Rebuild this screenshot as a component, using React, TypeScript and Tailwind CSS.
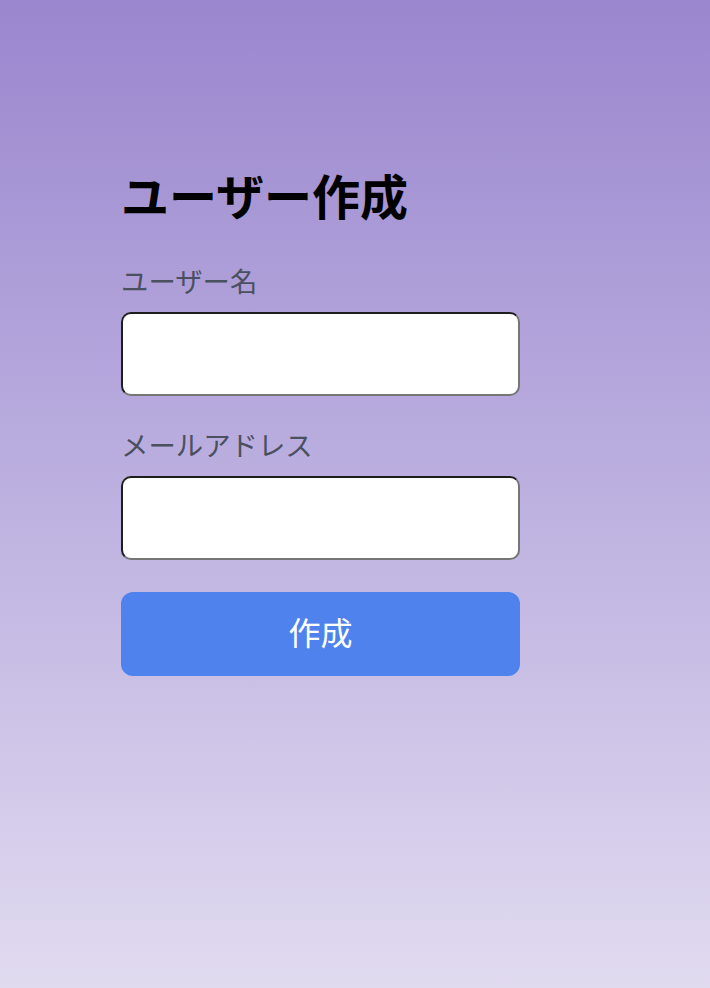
import React from "react";

export default function App() {
  return (
    <div
      className="min-h-[988px] w-full bg-gradient-to-b from-[#9a86ce] to-[#e1dbf0]"
      style={{ fontFamily: '"Noto Sans CJK JP", "Noto Sans", sans-serif' }}
    >
      <div className="pl-[121px] pt-[170px] w-[520px] flex flex-col">
        <h1 className="text-[48px] leading-[48px] font-bold text-black">ユーザー作成</h1>
        <label className="mt-[48px] text-[27.4px] leading-[28px] text-[#4b5060]">ユーザー名</label>
        <input
          type="text"
          className="mt-[18px] h-[84px] w-[399px] rounded-[10px] bg-white border-2 border-solid border-t-[#1e1e1e] border-l-[#1e1e1e] border-r-[#767676] border-b-[#767676] outline-none px-3 text-[28px]"
        />
        <label className="mt-[34px] text-[27.4px] leading-[28px] text-[#4b5060]">メールアドレス</label>
        <input
          type="email"
          className="mt-[18px] h-[84px] w-[399px] rounded-[10px] bg-white border-2 border-solid border-t-[#1e1e1e] border-l-[#1e1e1e] border-r-[#767676] border-b-[#767676] outline-none px-3 text-[28px]"
        />
        <button className="mt-[32px] h-[84px] w-[399px] rounded-[12px] bg-[#4f82ed] text-white text-[32px] leading-[32px] pb-[6px]">
          作成
        </button>
      </div>
    </div>
  );
}
